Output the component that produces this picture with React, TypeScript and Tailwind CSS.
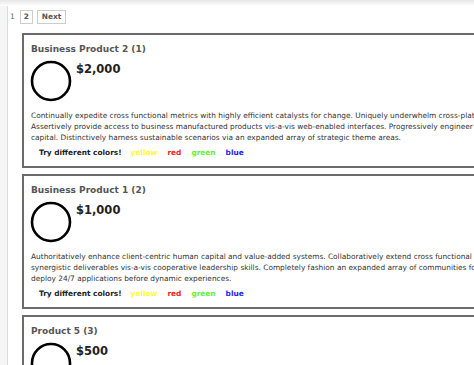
const products = [
  {
    title: 'Business Product 2 (1)',
    price: '$2,000',
    lines: [
      'Continually expedite cross functional metrics with highly efficient catalysts for change. Uniquely underwhelm cross-platform materials',
      'Assertively provide access to business manufactured products vis-a-vis web-enabled interfaces. Progressively engineer synergistic',
      'capital. Distinctively harness sustainable scenarios via an expanded array of strategic theme areas.',
    ],
  },
  {
    title: 'Business Product 1 (2)',
    price: '$1,000',
    lines: [
      'Authoritatively enhance client-centric human capital and value-added systems. Collaboratively extend cross functional e-commerce',
      'synergistic deliverables vis-a-vis cooperative leadership skills. Completely fashion an expanded array of communities for viral',
      'deploy 24/7 applications before dynamic experiences.',
    ],
  },
  {
    title: 'Product 5 (3)',
    price: '$500',
    lines: ['Objectively restore market-driven growth strategies whereas leading-edge web services.'],
  },
];

function ProductCard({ title, price, lines }: { title: string; price: string; lines: string[] }) {
  return (
    <div className="w-[470px] border-2 border-[#6b6b6b] bg-white pl-[7px] pt-[8px] pb-[8px] mb-[6px] overflow-hidden">
      <h2 className="text-[9px] font-bold text-[#555] leading-[12px]">{title}</h2>
      <div className="flex items-start mt-[5px]">
        <svg width="42" height="42" viewBox="0 0 42 42" className="shrink-0 -ml-[1px]">
          <circle cx="21" cy="21" r="19" fill="none" stroke="#000" strokeWidth="2.6" />
        </svg>
        <div className="ml-[4px] mt-[2px] text-[11.5px] font-bold text-[#222] leading-[14px]">{price}</div>
      </div>
      <p className="mt-[8px] text-[7.4px] leading-[11px] text-[#333] whitespace-nowrap">
        {lines.map((l, i) => (
          <span key={i} className="block">
            {l}
          </span>
        ))}
      </p>
      <div className="mt-[5px] flex items-center pl-[8px] text-[7.4px] font-bold leading-[10px]">
        <span className="text-[#222] mr-[9px]">Try different colors!</span>
        <span className="text-[#ffff33] mr-[10px]">yellow</span>
        <span className="text-[#ee2222] mr-[10px]">red</span>
        <span className="text-[#66ee33] mr-[10px]">green</span>
        <span className="text-[#2222ee]">blue</span>
      </div>
    </div>
  );
}

export default function App() {
  return (
    <div className="w-[474px] h-[365px] overflow-hidden bg-white" style={{ fontFamily: '"DejaVu Sans", Verdana, sans-serif' }}>
      <div className="h-[6px] bg-gradient-to-b from-[#e6e6e6] to-white" />
      <div className="flex h-full">
        <div className="w-[8px] shrink-0 bg-[#f5f5f5] border-r border-[#dcdcdc]" />
        <div className="flex-1 pl-[14px] pt-[4px]">
          <div className="flex items-center gap-[4px] -ml-[12px] text-[7.4px] font-bold text-[#555]">
            <span className="font-normal text-[#666] mr-[1px]">1</span>
            <span className="border border-[#ccc] bg-white px-[3px] py-[1px] leading-[10px]">2</span>
            <span className="border border-[#ccc] bg-white px-[4px] py-[1px] leading-[10px]">Next</span>
          </div>
          <div className="mt-[9px]">
            {products.map((p) => (
              <ProductCard key={p.title} {...p} />
            ))}
          </div>
        </div>
      </div>
    </div>
  );
}
